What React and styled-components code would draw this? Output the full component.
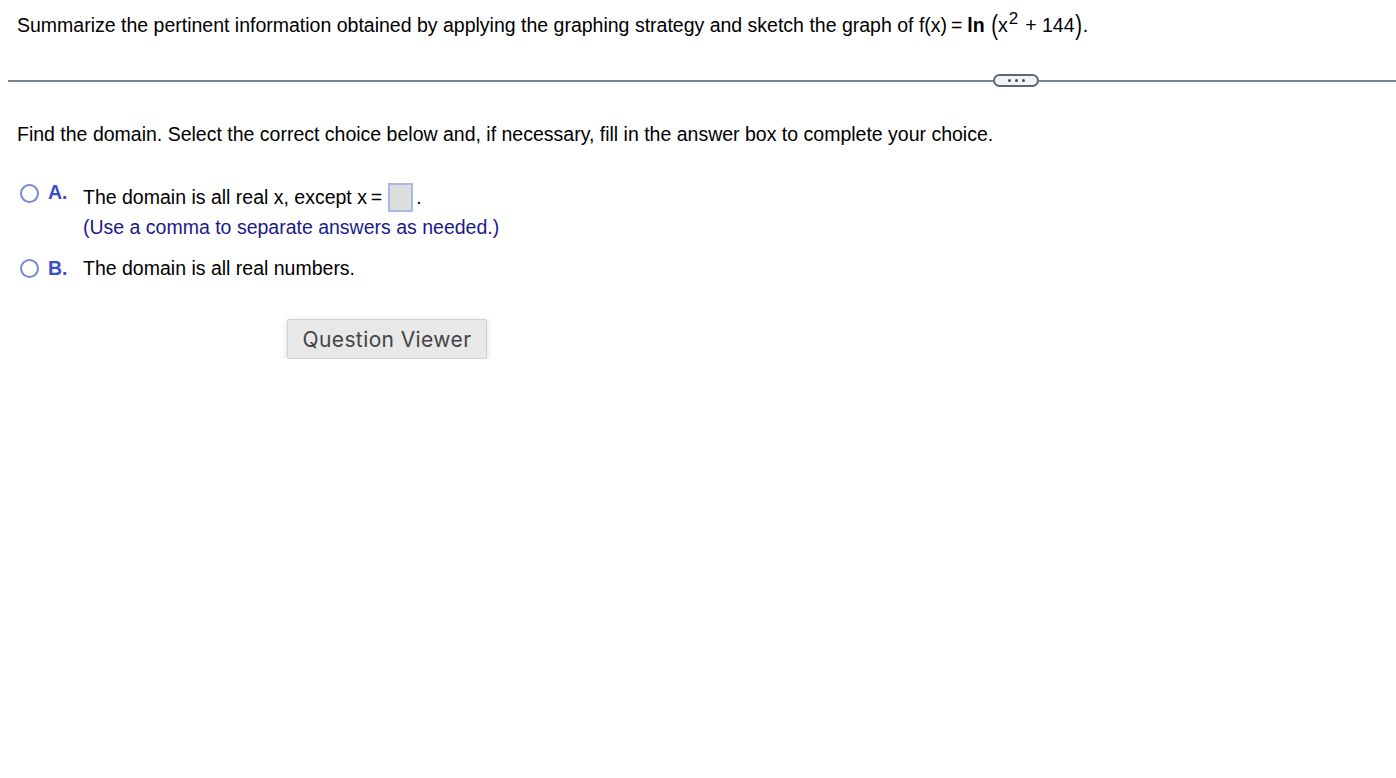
import styled, { createGlobalStyle } from "styled-components";

const GlobalStyle = createGlobalStyle`
    body {
        margin: 0;
        background: #fff;
        font-family: "Liberation Sans", Arial, sans-serif;
        color: #000;
    }
`;

const Page = styled.div`
    display: flex;
    flex-direction: column;
`;

const Prompt = styled.div`
    margin: 13px 0 0 17px;
    height: 24px;
    font-size: 19.5px;
    line-height: 24px;
    white-space: nowrap;
`;

const Fn = styled.b`
    margin-left: 1px;
`;

const Paren = styled.span`
    display: inline-block;
    font-size: 28px;
    line-height: 24px;
    transform: scaleX(0.72);
    vertical-align: top;
    margin: ${(p) => (p.$close ? "0 -1px 0 0" : "0 -1px 0 5px")};
`;

const Sup = styled.sup`
    font-size: 17px;
    vertical-align: 8px;
    line-height: 0;
    margin: 0 7px 0 1px;
`;

const Divider = styled.div`
    margin: 37px 0 0 8px;
    display: flex;
    align-items: center;
    height: 13px;
    &::before,
    &::after {
        content: "";
        height: 2px;
        background: #7d8391;
    }
    &::before {
        width: 985px;
    }
    &::after {
        flex: 1;
    }
`;

const More = styled.div`
    width: 42px;
    height: 9px;
    border: 2px solid #606774;
    border-radius: 7px;
    background: #f3f4f6;
    display: flex;
    align-items: center;
    justify-content: center;
    gap: 4px;
    span {
        width: 3px;
        height: 3px;
        border-radius: 50%;
        background: #4a505b;
    }
`;

const Instruction = styled.p`
    margin: 36px 0 0 17px;
    font-size: 19.5px;
    line-height: 22px;
`;

const Choices = styled.div`
    margin: 37px 0 0 20px;
    display: flex;
    flex-direction: column;
    gap: 19px;
`;

const Choice = styled.div`
    display: grid;
    grid-template-columns: 28px 35px auto;
    align-items: start;
    font-size: 19.5px;
    line-height: 22px;
`;

const Radio = styled.span`
    width: 19px;
    height: 19px;
    margin-top: 1.5px;
    border: 2px solid #7489dc;
    border-radius: 50%;
    box-sizing: border-box;
    background: #fff;
`;

const Letter = styled.span`
    font-weight: bold;
    color: #3b4ec4;
    line-height: ${(p) => (p.$raised ? "20px" : "22px")};
`;

const Body = styled.div`
    display: flex;
    flex-direction: column;
    gap: 4px;
`;

const Line = styled.div`
    display: flex;
    align-items: center;
    min-height: ${(p) => (p.$tall ? "30px" : "22px")};
`;

const AnswerBox = styled.span`
    display: inline-block;
    width: 25px;
    height: 29px;
    margin: 0 3px 0 6px;
    border: 2px solid #a9b8e6;
    background: #dddddd;
    box-sizing: border-box;
`;

const Hint = styled.div`
    color: #1a1a8c;
`;

const ViewerButton = styled.button`
    align-self: flex-start;
    margin: 40px 0 0 287px;
    width: 200px;
    height: 40px;
    padding: 0;
    font-family: Inter, "Open Sans", sans-serif;
    font-size: 21px;
    letter-spacing: 0.4px;
    color: #444;
    background: #e8e8e8;
    border: 1px solid #d2d2d2;
    border-radius: 2px;
    box-shadow: 0 2px 6px rgba(0, 0, 0, 0.16);
`;

export default function App() {
    return (
        <Page>
            <GlobalStyle />
            <Prompt>
                Summarize the pertinent information obtained by applying the graphing strategy and sketch the graph of
                f(x)&#8201;=&#8201;<Fn>ln</Fn>
                <Paren>(</Paren>x<Sup>2</Sup>+ 144<Paren $close>)</Paren>.
            </Prompt>
            <Divider>
                <More>
                    <span />
                    <span />
                    <span />
                </More>
            </Divider>
            <Instruction>
                Find the domain. Select the correct choice below and, if necessary, fill in the answer box to complete your
                choice.
            </Instruction>
            <Choices>
                <Choice>
                    <Radio />
                    <Letter $raised>A.</Letter>
                    <Body>
                        <Line $tall>
                            The domain is all real x, except x&#8201;=<AnswerBox />.
                        </Line>
                        <Hint>(Use a comma to separate answers as needed.)</Hint>
                    </Body>
                </Choice>
                <Choice>
                    <Radio />
                    <Letter>B.</Letter>
                    <Body>
                        <Line>The domain is all real numbers.</Line>
                    </Body>
                </Choice>
            </Choices>
            <ViewerButton>Question Viewer</ViewerButton>
        </Page>
    );
}
